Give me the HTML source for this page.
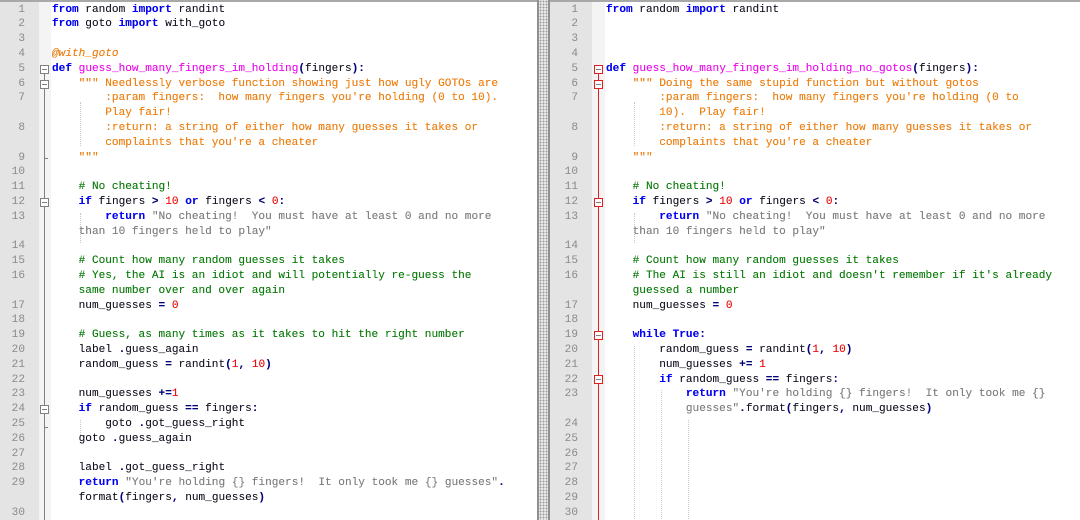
<!DOCTYPE html>
<html><head><meta charset="utf-8"><style>
*{margin:0;padding:0;box-sizing:border-box}
body{width:1080px;height:520px;overflow:hidden;background:#fff;font-family:"Liberation Mono",monospace;font-size:11.1px;position:relative}
.pane{position:absolute;top:0;height:520px;background:#fff;border-top:2px solid #a8a8a8;overflow:hidden}
.gut{position:absolute;top:0;bottom:0;background:#e4e4e4}
.fold{position:absolute;top:0;bottom:0;background:#f4f4f4}
.row{position:absolute;left:0;right:0;height:14.8px;line-height:14.8px;white-space:pre;color:#101020;text-shadow:0 0 0.3px rgba(0,0,0,0.5)}
.ln{position:absolute;text-align:right;color:#8a8a8a;text-shadow:none}
.code{position:absolute}
.k{color:#0000ff;font-weight:bold}
.f{color:#ff00ff}
.d{color:#ff8000}
.at{color:#ff8000;font-style:italic}
.c{color:#008000}
.n{color:#ff0000}
.s{color:#808080}
.o{color:#000080;font-weight:bold}
.box{position:absolute;width:9px;height:9px;border:1px solid #808080;background:#fff}
.box::after{content:"";position:absolute;left:1px;right:1px;top:3px;height:1px;background:#808080}
.r .box{border-color:#e02020}
.r .box::after{background:#808080}
.vl{position:absolute;width:1px;background:#808080}
.r .vl{background:#e02020}
.split{position:absolute;left:537px;width:13px;top:0;bottom:0;background:#e8e8e8;border-left:2px solid #909090;border-right:2px solid #909090;background-image:radial-gradient(#a0a0a0 0.8px,transparent 1px);background-size:3px 3px}
.ig{position:absolute;width:1px;border-left:1px dotted #c8c8c8}
</style></head><body>

<div class="pane" style="left:0;width:537px">
<div class="gut" style="left:0;width:39px"></div>
<div class="fold" style="left:39px;width:12px"></div>
<div class="vl" style="left:44px;top:71px;height:448px"></div>
<div class="box" style="left:40px;top:63px"></div>
<div class="box" style="left:40px;top:78px"></div>
<div class="vl" style="left:44px;top:156px;height:1px;width:4px"></div>
<div class="box" style="left:40px;top:196px"></div>
<div class="box" style="left:40px;top:403px"></div>
<div class="vl" style="left:44px;top:425px;height:1px;width:4px"></div>
<div class="ig" style="left:80px;top:100px;height:44px"></div>
<div class="ig" style="left:80px;top:211px;height:30px"></div>
<div class="ig" style="left:80px;top:418px;height:15px"></div>
<div style="position:absolute;top:-1px;left:0;right:0">
<div class="row" style="top:1.6px"><span class="ln" style="width:25px">1</span><span class="code" style="left:52px"><span class="k">from</span> random <span class="k">import</span> randint</span></div>
<div class="row" style="top:16.4px"><span class="ln" style="width:25px">2</span><span class="code" style="left:52px"><span class="k">from</span> goto <span class="k">import</span> with_goto</span></div>
<div class="row" style="top:31.2px"><span class="ln" style="width:25px">3</span></div>
<div class="row" style="top:46px"><span class="ln" style="width:25px">4</span><span class="code" style="left:52px"><span class="at">@with_goto</span></span></div>
<div class="row" style="top:60.8px"><span class="ln" style="width:25px">5</span><span class="code" style="left:52px"><span class="k">def</span> <span class="f">guess_how_many_fingers_im_holding</span><span class="o">(</span>fingers<span class="o">):</span></span></div>
<div class="row" style="top:75.6px"><span class="ln" style="width:25px">6</span><span class="code" style="left:52px"><span class="d">    """ Needlessly verbose function showing just how ugly GOTOs are</span></span></div>
<div class="row" style="top:90.4px"><span class="ln" style="width:25px">7</span><span class="code" style="left:52px"><span class="d">        :param fingers:  how many fingers you're holding (0 to 10).</span></span></div>
<div class="row" style="top:105.2px"><span class="code" style="left:52px"><span class="d">        Play fair!</span></span></div>
<div class="row" style="top:120px"><span class="ln" style="width:25px">8</span><span class="code" style="left:52px"><span class="d">        :return: a string of either how many guesses it takes or</span></span></div>
<div class="row" style="top:134.8px"><span class="code" style="left:52px"><span class="d">        complaints that you're a cheater</span></span></div>
<div class="row" style="top:149.6px"><span class="ln" style="width:25px">9</span><span class="code" style="left:52px"><span class="d">    """</span></span></div>
<div class="row" style="top:164.4px"><span class="ln" style="width:25px">10</span></div>
<div class="row" style="top:179.2px"><span class="ln" style="width:25px">11</span><span class="code" style="left:52px"><span class="c">    # No cheating!</span></span></div>
<div class="row" style="top:194px"><span class="ln" style="width:25px">12</span><span class="code" style="left:52px">    <span class="k">if</span> fingers <span class="o">&gt;</span> <span class="n">10</span> <span class="k">or</span> fingers <span class="o">&lt;</span> <span class="n">0</span><span class="o">:</span></span></div>
<div class="row" style="top:208.8px"><span class="ln" style="width:25px">13</span><span class="code" style="left:52px">        <span class="k">return</span> <span class="s">"No cheating!  You must have at least 0 and no more</span></span></div>
<div class="row" style="top:223.6px"><span class="code" style="left:52px"><span class="s">    than 10 fingers held to play"</span></span></div>
<div class="row" style="top:238.4px"><span class="ln" style="width:25px">14</span></div>
<div class="row" style="top:253.2px"><span class="ln" style="width:25px">15</span><span class="code" style="left:52px"><span class="c">    # Count how many random guesses it takes</span></span></div>
<div class="row" style="top:268px"><span class="ln" style="width:25px">16</span><span class="code" style="left:52px"><span class="c">    # Yes, the AI is an idiot and will potentially re-guess the</span></span></div>
<div class="row" style="top:282.8px"><span class="code" style="left:52px"><span class="c">    same number over and over again</span></span></div>
<div class="row" style="top:297.6px"><span class="ln" style="width:25px">17</span><span class="code" style="left:52px">    num_guesses <span class="o">=</span> <span class="n">0</span></span></div>
<div class="row" style="top:312.4px"><span class="ln" style="width:25px">18</span></div>
<div class="row" style="top:327.2px"><span class="ln" style="width:25px">19</span><span class="code" style="left:52px"><span class="c">    # Guess, as many times as it takes to hit the right number</span></span></div>
<div class="row" style="top:342px"><span class="ln" style="width:25px">20</span><span class="code" style="left:52px">    label <span class="o">.</span>guess_again</span></div>
<div class="row" style="top:356.8px"><span class="ln" style="width:25px">21</span><span class="code" style="left:52px">    random_guess <span class="o">=</span> randint<span class="o">(</span><span class="n">1</span><span class="o">,</span> <span class="n">10</span><span class="o">)</span></span></div>
<div class="row" style="top:371.6px"><span class="ln" style="width:25px">22</span></div>
<div class="row" style="top:386.4px"><span class="ln" style="width:25px">23</span><span class="code" style="left:52px">    num_guesses <span class="o">+=</span><span class="n">1</span></span></div>
<div class="row" style="top:401.2px"><span class="ln" style="width:25px">24</span><span class="code" style="left:52px">    <span class="k">if</span> random_guess <span class="o">==</span> fingers<span class="o">:</span></span></div>
<div class="row" style="top:416px"><span class="ln" style="width:25px">25</span><span class="code" style="left:52px">        goto <span class="o">.</span>got_guess_right</span></div>
<div class="row" style="top:430.8px"><span class="ln" style="width:25px">26</span><span class="code" style="left:52px">    goto <span class="o">.</span>guess_again</span></div>
<div class="row" style="top:445.6px"><span class="ln" style="width:25px">27</span></div>
<div class="row" style="top:460.4px"><span class="ln" style="width:25px">28</span><span class="code" style="left:52px">    label <span class="o">.</span>got_guess_right</span></div>
<div class="row" style="top:475.2px"><span class="ln" style="width:25px">29</span><span class="code" style="left:52px">    <span class="k">return</span> <span class="s">"You're holding {} fingers!  It only took me {} guesses"</span><span class="o">.</span></span></div>
<div class="row" style="top:490px"><span class="code" style="left:52px">    format<span class="o">(</span>fingers<span class="o">,</span> num_guesses<span class="o">)</span></span></div>
<div class="row" style="top:504.8px"><span class="ln" style="width:25px">30</span></div>
</div>
</div>

<div class="split"></div>

<div class="pane r" style="left:550px;width:530px">
<div class="gut" style="left:0;width:42px"></div>
<div class="fold" style="left:42px;width:13px"></div>
<div class="vl" style="left:48px;top:71px;height:448px"></div>
<div class="box" style="left:44px;top:63px"></div>
<div class="box" style="left:44px;top:78px"></div>
<div class="box" style="left:44px;top:196px"></div>
<div class="box" style="left:44px;top:329px"></div>
<div class="box" style="left:44px;top:373px"></div>
<div class="ig" style="left:84px;top:100px;height:44px"></div>
<div class="ig" style="left:84px;top:211px;height:30px"></div>
<div class="ig" style="left:84px;top:344px;height:175px"></div>
<div class="ig" style="left:111px;top:388px;height:131px"></div>
<div class="ig" style="left:138px;top:418px;height:101px"></div>
<div style="position:absolute;top:-1px;left:0;right:0">
<div class="row" style="top:1.6px"><span class="ln" style="width:28px">1</span><span class="code" style="left:56px"><span class="k">from</span> random <span class="k">import</span> randint</span></div>
<div class="row" style="top:16.4px"><span class="ln" style="width:28px">2</span></div>
<div class="row" style="top:31.2px"><span class="ln" style="width:28px">3</span></div>
<div class="row" style="top:46px"><span class="ln" style="width:28px">4</span></div>
<div class="row" style="top:60.8px"><span class="ln" style="width:28px">5</span><span class="code" style="left:56px"><span class="k">def</span> <span class="f">guess_how_many_fingers_im_holding_no_gotos</span><span class="o">(</span>fingers<span class="o">):</span></span></div>
<div class="row" style="top:75.6px"><span class="ln" style="width:28px">6</span><span class="code" style="left:56px"><span class="d">    """ Doing the same stupid function but without gotos</span></span></div>
<div class="row" style="top:90.4px"><span class="ln" style="width:28px">7</span><span class="code" style="left:56px"><span class="d">        :param fingers:  how many fingers you're holding (0 to</span></span></div>
<div class="row" style="top:105.2px"><span class="code" style="left:56px"><span class="d">        10).  Play fair!</span></span></div>
<div class="row" style="top:120px"><span class="ln" style="width:28px">8</span><span class="code" style="left:56px"><span class="d">        :return: a string of either how many guesses it takes or</span></span></div>
<div class="row" style="top:134.8px"><span class="code" style="left:56px"><span class="d">        complaints that you're a cheater</span></span></div>
<div class="row" style="top:149.6px"><span class="ln" style="width:28px">9</span><span class="code" style="left:56px"><span class="d">    """</span></span></div>
<div class="row" style="top:164.4px"><span class="ln" style="width:28px">10</span></div>
<div class="row" style="top:179.2px"><span class="ln" style="width:28px">11</span><span class="code" style="left:56px"><span class="c">    # No cheating!</span></span></div>
<div class="row" style="top:194px"><span class="ln" style="width:28px">12</span><span class="code" style="left:56px">    <span class="k">if</span> fingers <span class="o">&gt;</span> <span class="n">10</span> <span class="k">or</span> fingers <span class="o">&lt;</span> <span class="n">0</span><span class="o">:</span></span></div>
<div class="row" style="top:208.8px"><span class="ln" style="width:28px">13</span><span class="code" style="left:56px">        <span class="k">return</span> <span class="s">"No cheating!  You must have at least 0 and no more</span></span></div>
<div class="row" style="top:223.6px"><span class="code" style="left:56px"><span class="s">    than 10 fingers held to play"</span></span></div>
<div class="row" style="top:238.4px"><span class="ln" style="width:28px">14</span></div>
<div class="row" style="top:253.2px"><span class="ln" style="width:28px">15</span><span class="code" style="left:56px"><span class="c">    # Count how many random guesses it takes</span></span></div>
<div class="row" style="top:268px"><span class="ln" style="width:28px">16</span><span class="code" style="left:56px"><span class="c">    # The AI is still an idiot and doesn't remember if it's already</span></span></div>
<div class="row" style="top:282.8px"><span class="code" style="left:56px"><span class="c">    guessed a number</span></span></div>
<div class="row" style="top:297.6px"><span class="ln" style="width:28px">17</span><span class="code" style="left:56px">    num_guesses <span class="o">=</span> <span class="n">0</span></span></div>
<div class="row" style="top:312.4px"><span class="ln" style="width:28px">18</span></div>
<div class="row" style="top:327.2px"><span class="ln" style="width:28px">19</span><span class="code" style="left:56px">    <span class="k">while</span> <span class="k">True</span><span class="o">:</span></span></div>
<div class="row" style="top:342px"><span class="ln" style="width:28px">20</span><span class="code" style="left:56px">        random_guess <span class="o">=</span> randint<span class="o">(</span><span class="n">1</span><span class="o">,</span> <span class="n">10</span><span class="o">)</span></span></div>
<div class="row" style="top:356.8px"><span class="ln" style="width:28px">21</span><span class="code" style="left:56px">        num_guesses <span class="o">+=</span> <span class="n">1</span></span></div>
<div class="row" style="top:371.6px"><span class="ln" style="width:28px">22</span><span class="code" style="left:56px">        <span class="k">if</span> random_guess <span class="o">==</span> fingers<span class="o">:</span></span></div>
<div class="row" style="top:386.4px"><span class="ln" style="width:28px">23</span><span class="code" style="left:56px">            <span class="k">return</span> <span class="s">"You're holding {} fingers!  It only took me {}</span></span></div>
<div class="row" style="top:401.2px"><span class="code" style="left:56px"><span class="s">            guesses"</span><span class="o">.</span>format<span class="o">(</span>fingers<span class="o">,</span> num_guesses<span class="o">)</span></span></div>
<div class="row" style="top:416px"><span class="ln" style="width:28px">24</span></div>
<div class="row" style="top:430.8px"><span class="ln" style="width:28px">25</span></div>
<div class="row" style="top:445.6px"><span class="ln" style="width:28px">26</span></div>
<div class="row" style="top:460.4px"><span class="ln" style="width:28px">27</span></div>
<div class="row" style="top:475.2px"><span class="ln" style="width:28px">28</span></div>
<div class="row" style="top:490px"><span class="ln" style="width:28px">29</span></div>
<div class="row" style="top:504.8px"><span class="ln" style="width:28px">30</span></div>
</div>
</div>
</body></html>
